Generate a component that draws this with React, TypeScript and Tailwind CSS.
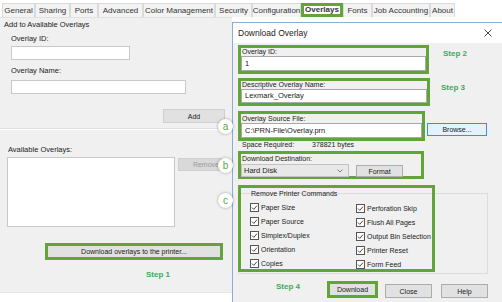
import React from 'react';

const TABS = [
  { label: 'General', w: 33 },
  { label: 'Sharing', w: 35 },
  { label: 'Ports', w: 28 },
  { label: 'Advanced', w: 45 },
  { label: 'Color Management', w: 72 },
  { label: 'Security', w: 37 },
  { label: 'Configuration', w: 49 },
  { label: 'Overlays', w: 42, active: true },
  { label: 'Fonts', w: 29 },
  { label: 'Job Accounting', w: 58 },
  { label: 'About', w: 25 },
];

const LEFT_CMDS = ['Paper Size', 'Paper Source', 'Simplex/Duplex', 'Orientation', 'Copies'];
const RIGHT_CMDS = ['Perforation Skip', 'Flush All Pages', 'Output Bin Selection', 'Printer Reset', 'Form Feed'];

const Check = ({ label }: { label: string }) => (
  <div className="flex items-center h-[14px]">
    <div className="w-[9px] h-[9px] border border-[#555] bg-white flex items-center justify-center">
      <svg width="7" height="7" viewBox="0 0 7 7">
        <path d="M1 3.6 L2.8 5.4 L6 1.6" fill="none" stroke="#333" strokeWidth="0.9" />
      </svg>
    </div>
    <span className="ml-[2px] text-[7px] leading-[9px] text-[#222]">{label}</span>
  </div>
);

const Bubble = ({ letter, top }: { letter: string; top: string }) => (
  <div
    className={`absolute left-[218px] ${top} w-[15px] h-[15px] rounded-full bg-white shadow-[0_0_3px_rgba(0,0,0,0.35)] flex items-center justify-center text-[10px] leading-none text-[#5aa63a]`}
  >
    {letter}
  </div>
);

const GREEN = 'border-[3px] border-[#62a33a]';

export default function App() {
  return (
    <div className="relative w-[502px] h-[302px] overflow-hidden bg-white text-[#222] font-['Liberation_Sans',Arial,sans-serif]">
      {/* tab strip */}
      <div className="flex items-end h-[17px] pl-[2px] bg-white">
        {TABS.map((t) =>
          t.active ? (
            <div
              key={t.label}
              style={{ width: t.w }}
              className={`h-[14px] ${GREEN} bg-white flex items-center justify-center text-[8px] leading-none font-bold text-[#333]`}
            >
              {t.label}
            </div>
          ) : (
            <div
              key={t.label}
              style={{ width: t.w }}
              className="h-[14px] border border-b-0 border-[#dadada] bg-[#f3f3f3] flex items-center justify-center text-[8px] leading-none text-[#333]"
            >
              {t.label}
            </div>
          )
        )}
      </div>

      {/* property page */}
      <div className="h-[275px] bg-[#f0f0f0] border-t border-[#e2e2e2] w-[232px] flex flex-col">
        <div className="ml-[4px] mt-[2px] text-[7.5px] leading-[10px]">Add to Available Overlays</div>
        <div className="ml-[11px] mt-[4px] text-[7.5px] leading-[10px]">Overlay ID:</div>
        <div className="ml-[11px] mt-[2px] w-[119px] h-[14px] bg-white border border-[#c9c9c9]" />
        <div className="ml-[11px] mt-[6px] text-[7.5px] leading-[10px]">Overlay Name:</div>
        <div className="ml-[11px] mt-[4px] w-[175px] h-[14px] bg-white border border-[#c9c9c9]" />
        <div className="ml-[163px] mt-[15px] w-[62px] h-[14px] bg-[#e1e1e1] border border-[#cfcfcf] flex items-center justify-center text-[7px] leading-none">
          Add
        </div>
        <div className="mt-[5px] w-[226px] h-[1px] bg-[#dedede]" />
        <div className="w-[226px] h-[1px] bg-white" />
        <div className="ml-[8px] mt-[15px] text-[7.5px] leading-[10px]">Available Overlays:</div>
        <div className="flex mt-[2px] ml-[7px]">
          <div className="w-[168px] h-[70px] bg-white border border-[#c9c9c9]" />
          <div className="ml-[3px] mt-[1px] w-[44px] h-[13px] bg-[#d9d9d9] border border-[#d0d0d0] flex items-center justify-end pr-[2px] text-[7px] leading-none text-[#9a9a9a]">
            Remove
          </div>
        </div>
        <div className={`ml-[45px] mt-[16px] w-[178px] h-[17px] ${GREEN} bg-[#e1e1e1] flex items-center justify-center text-[7px] leading-none`}>
          Download overlays to the printer...
        </div>
        <div className="ml-[146px] mt-[10px] text-[8px] leading-[10px] font-bold text-[#3daa5c]">Step 1</div>
      </div>
      <div className="w-[232px] h-[1px] bg-[#e6e6e6]" />

      {/* Download Overlay dialog */}
      <div className="absolute left-[232px] top-[22px] w-[270px] h-[280px] bg-[#f0f0f0] border-l border-t border-[#88aed6] flex flex-col">
        <div className="h-[20px] bg-white flex items-center justify-between pl-[5px] pr-[10px]">
          <span className="text-[8.5px] leading-none text-[#222]">Download Overlay</span>
          <svg width="8" height="8" viewBox="0 0 8 8">
            <path d="M0.5 0.5 L7.5 7.5 M7.5 0.5 L0.5 7.5" stroke="#333" strokeWidth="0.9" />
          </svg>
        </div>

        <div className="pl-[5px] flex flex-col">
          <div className="flex items-start mt-[2px]">
            <div className={`w-[191px] h-[29px] ${GREEN} flex flex-col px-[0px]`}>
              <div className="text-[7px] leading-[8px] pl-[1px]">Overlay ID:</div>
              <div className="h-[15px] bg-white border border-[#a8a8a8] flex items-center pl-[3px] text-[7.5px] leading-none">1</div>
            </div>
            <div className="ml-[14px] mt-[4px] text-[8px] leading-[10px] font-bold text-[#3daa5c]">Step 2</div>
          </div>

          <div className="flex items-start mt-[4px]">
            <div className={`w-[192px] h-[28px] ${GREEN} flex flex-col`}>
              <div className="text-[7px] leading-[8px] pl-[1px]">Descriptive Overlay Name:</div>
              <div className="h-[14px] bg-white border border-[#a8a8a8] flex items-center pl-[3px] text-[7.5px] leading-none">
                Lexmark_Overlay
              </div>
            </div>
            <div className="ml-[11px] mt-[5px] text-[8px] leading-[10px] font-bold text-[#3daa5c]">Step 3</div>
          </div>

          <div className="flex items-start mt-[5px]">
            <div className={`w-[187px] h-[30px] ${GREEN} flex flex-col`}>
              <div className="text-[7px] leading-[9px] pl-[1px]">Overlay Source File:</div>
              <div className="h-[15px] bg-white border border-[#a8a8a8] flex items-center pl-[3px] text-[7.5px] leading-none">
                C:\PRN-File\Overlay.prn
              </div>
            </div>
            <div className="ml-[2px] mt-[12px] w-[60px] h-[13px] bg-[#e5f1fb] border border-[#3c8ee0] flex items-center justify-center text-[7px] leading-none">
              Browse...
            </div>
          </div>

          <div className="flex text-[7px] leading-[8px] ml-[4px]">
            <span className="w-[70px]">Space Required:</span>
            <span>378821 bytes</span>
          </div>

          <div className={`mt-[2px] w-[186px] h-[28px] ${GREEN} flex flex-col`}>
            <div className="text-[7px] leading-[10px] pl-[1px]">Download Destination:</div>
            <div className="flex items-start">
              <div className="w-[108px] h-[13px] bg-[#e8e8e8] border border-[#c2c2c2] flex items-center justify-between pl-[2px] pr-[5px] text-[7.5px] leading-none">
                <span>Hard Disk</span>
                <svg width="6" height="4" viewBox="0 0 6 4">
                  <path d="M0.5 0.5 L3 3 L5.5 0.5" fill="none" stroke="#666" strokeWidth="0.8" />
                </svg>
              </div>
              <div className="ml-[7px] mt-[1px] w-[47px] h-[12px] bg-[#e1e1e1] border border-[#adadad] flex items-center justify-center text-[7px] leading-none">
                Format
              </div>
            </div>
          </div>

          <div className="relative mt-[6px]">
            <div className="absolute left-0 top-[8px] w-[250px] h-[81px] border border-[#dcdcdc]" />
            <div className={`relative w-[197px] h-[87px] ${GREEN} flex flex-col`}>
              <div className="ml-[10px] mt-[1px] text-[7px] leading-[9px]">Remove Printer Commands</div>
              <div className="flex mt-[2px] ml-[9px]">
                <div className="w-[106px] flex flex-col">
                  {LEFT_CMDS.map((c) => (
                    <Check key={c} label={c} />
                  ))}
                </div>
                <div className="flex flex-col mt-[1px]">
                  {RIGHT_CMDS.map((c) => (
                    <Check key={c} label={c} />
                  ))}
                </div>
              </div>
            </div>
          </div>

          <div className="flex items-start mt-[9px]">
            <div className="w-[89px] pl-[38px] mt-[1px] text-[8px] leading-[10px] font-bold text-[#3daa5c]">Step 4</div>
            <div className={`w-[51px] h-[17px] ${GREEN} bg-[#e1e1e1] flex items-center justify-center text-[7px] leading-none`}>
              Download
            </div>
            <div className="ml-[7px] mt-[3px] w-[47px] h-[14px] bg-[#e1e1e1] border border-[#adadad] flex items-center justify-center text-[7px] leading-none">
              Close
            </div>
            <div className="ml-[9px] mt-[3px] w-[47px] h-[14px] bg-[#e1e1e1] border border-[#adadad] flex items-center justify-center text-[7px] leading-none">
              Help
            </div>
          </div>
        </div>
      </div>

      <Bubble letter="a" top="top-[119px]" />
      <Bubble letter="b" top="top-[158px]" />
      <Bubble letter="c" top="top-[193px]" />
    </div>
  );
}
